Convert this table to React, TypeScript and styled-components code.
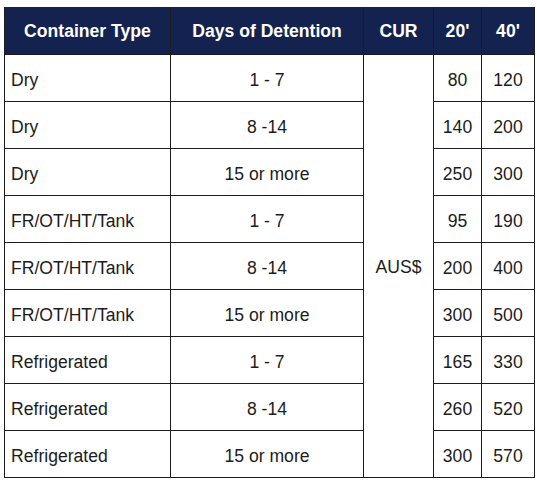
import React from 'react';
import styled, { createGlobalStyle } from 'styled-components';

const GlobalStyle = createGlobalStyle`
  html, body {
    margin: 0;
    padding: 0;
    background: #ffffff;
  }
  body {
    font-family: "Liberation Sans", Arial, sans-serif;
  }
`;

const Page = styled.div`
  padding: 7px 0 0 4px;
`;

const Table = styled.table`
  border-collapse: collapse;
  table-layout: fixed;
  width: 530px;
  font-family: "Liberation Sans", Arial, sans-serif;
  font-size: 17.6px;
  color: #1c1c1c;
`;

const HeadCell = styled.th`
  height: 45px;
  padding: 1px 4px 0;
  background: #14224f;
  color: #ffffff;
  font-weight: bold;
  text-align: center;
  border: 1px solid #1c1c1c;
  border-top-color: #14224f;
`;

const Cell = styled.td<{ $align?: 'left' | 'center' }>`
  height: 42px;
  padding: 4px 6px 0;
  text-align: ${(p) => p.$align ?? 'center'};
  vertical-align: middle;
  border: 1px solid #1c1c1c;
  white-space: nowrap;
`;

const CurrencyCell = styled(Cell)`
  padding-top: 2px;
`;

type Row = { type: string; days: string; a: number; b: number };

const rows: Row[] = [
  { type: 'Dry', days: '1 - 7', a: 80, b: 120 },
  { type: 'Dry', days: '8 -14', a: 140, b: 200 },
  { type: 'Dry', days: '15 or more', a: 250, b: 300 },
  { type: 'FR/OT/HT/Tank', days: '1 - 7', a: 95, b: 190 },
  { type: 'FR/OT/HT/Tank', days: '8 -14', a: 200, b: 400 },
  { type: 'FR/OT/HT/Tank', days: '15 or more', a: 300, b: 500 },
  { type: 'Refrigerated', days: '1 - 7', a: 165, b: 330 },
  { type: 'Refrigerated', days: '8 -14', a: 260, b: 520 },
  { type: 'Refrigerated', days: '15 or more', a: 300, b: 570 },
];

export default function App() {
  return (
    <Page>
      <GlobalStyle />
      <Table>
        <colgroup>
          <col style={{ width: 166 }} />
          <col style={{ width: 193 }} />
          <col style={{ width: 70 }} />
          <col style={{ width: 48 }} />
          <col style={{ width: 53 }} />
        </colgroup>
        <thead>
          <tr>
            <HeadCell>Container Type</HeadCell>
            <HeadCell>Days of Detention</HeadCell>
            <HeadCell>CUR</HeadCell>
            <HeadCell>20'</HeadCell>
            <HeadCell>40'</HeadCell>
          </tr>
        </thead>
        <tbody>
          {rows.map((r, i) => (
            <tr key={i}>
              <Cell $align="left">{r.type}</Cell>
              <Cell>{r.days}</Cell>
              {i === 0 && <CurrencyCell rowSpan={rows.length}>AUS$</CurrencyCell>}
              <Cell>{r.a}</Cell>
              <Cell>{r.b}</Cell>
            </tr>
          ))}
        </tbody>
      </Table>
    </Page>
  );
}
